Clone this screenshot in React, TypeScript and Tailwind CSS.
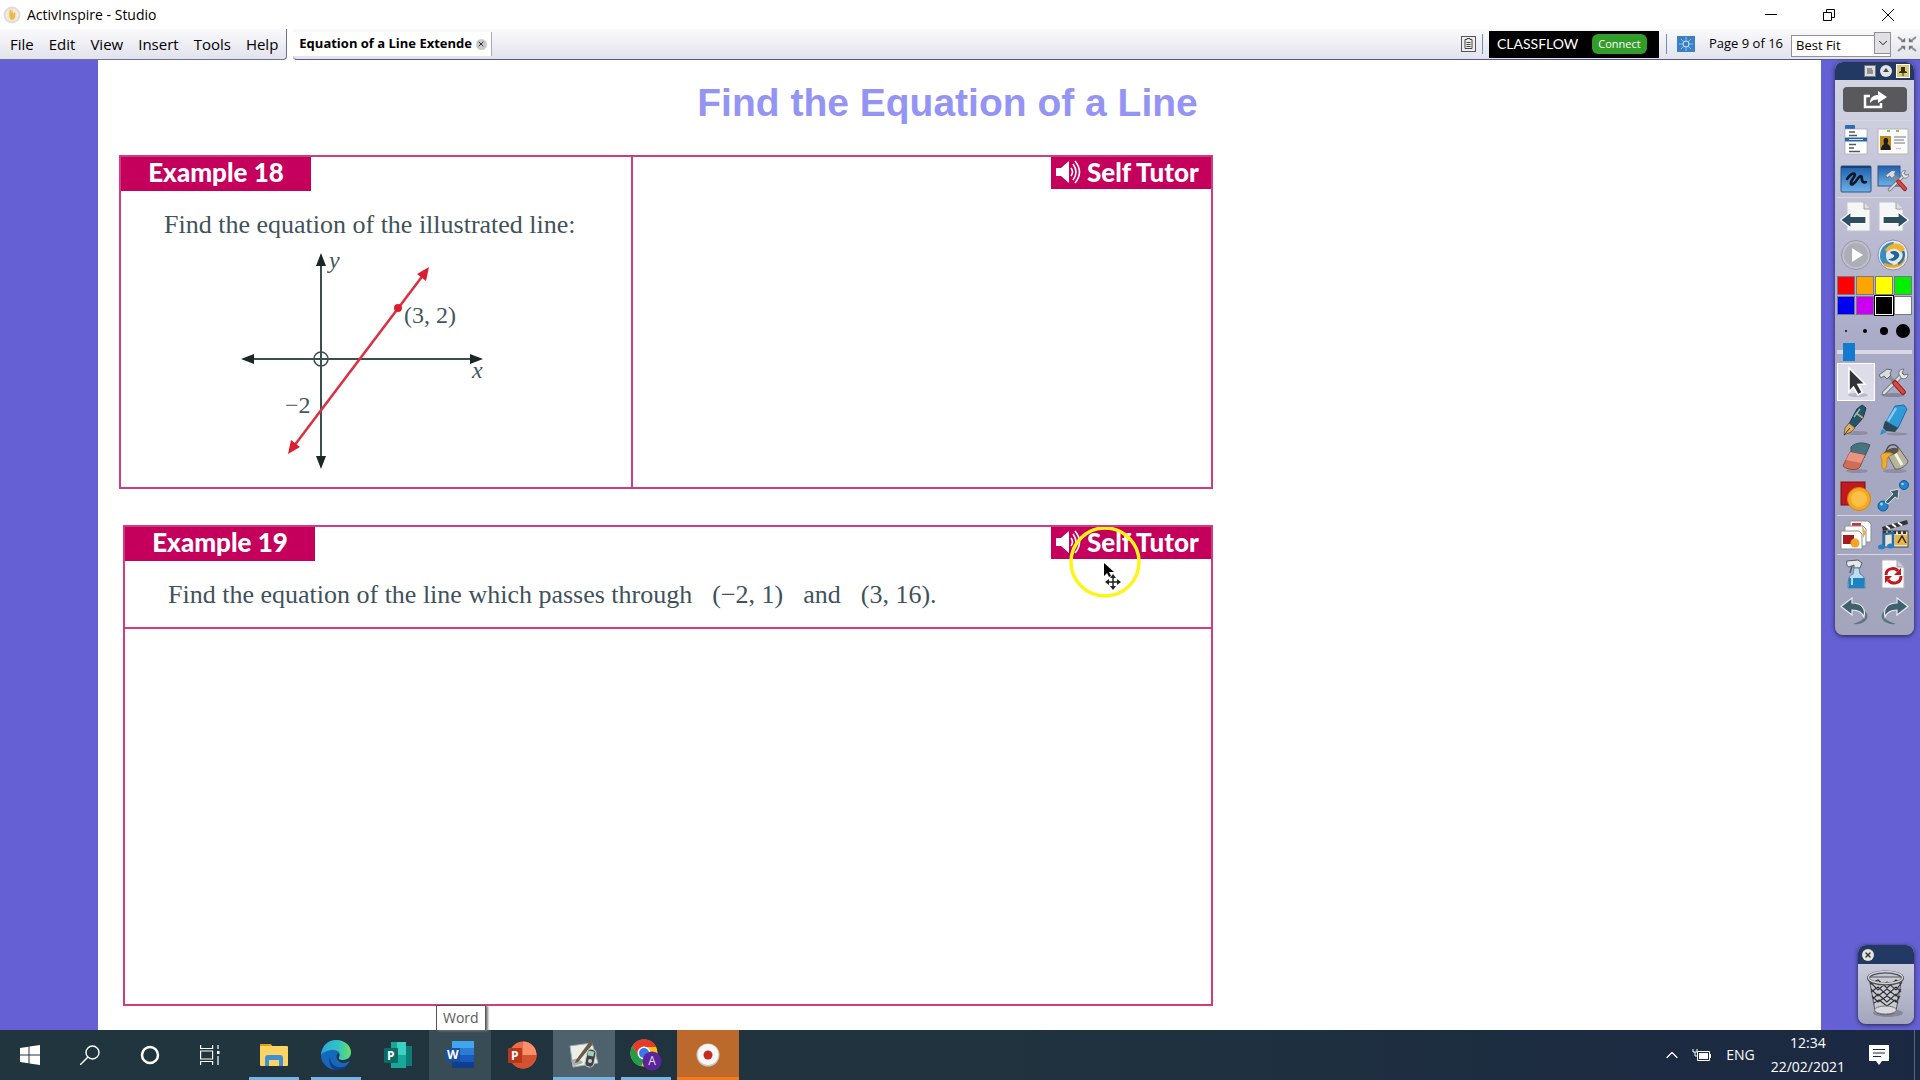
import type { ReactNode } from "react";
import { ChevronDown, ChevronUp, X } from "lucide-react";

const MENUS = ["File", "Edit", "View", "Insert", "Tools", "Help"];

const COLORS = [
    { name: "Red", bg: "bg-[#ff0000]" },
    { name: "Orange", bg: "bg-[#ffa500]" },
    { name: "Yellow", bg: "bg-[#ffff00]" },
    { name: "Green", bg: "bg-[#00f000]" },
    { name: "Blue", bg: "bg-[#0000f0]" },
    { name: "Magenta", bg: "bg-[#cc00f0]" },
    { name: "Black", bg: "bg-black", selected: true },
    { name: "White", bg: "bg-white" },
];

/* ---------- toolbox icons (32 x 32 grid) ---------- */

const Icon = ({ children }: { children: ReactNode }) => (
    <svg viewBox="0 0 32 32" className="h-8 w-8" fill="none">{children}</svg>
);

const MenuIcon = () => (
    <Icon>
        <rect x="5" y="1" width="10" height="6" rx="1" fill="#2e6bb0" />
        <rect x="5" y="5" width="22" height="25" fill="#fff" stroke="#9a9cb0" strokeWidth=".6" />
        <path d="M9 8h6M9 11.500h8M9 20.500h7M9 24h5M9 27.500h11" stroke="#55565f" strokeWidth="1.300" />
        <rect x="5" y="13.500" width="22" height="4" fill="#2b62a6" />
        <path d="M9 15.500h14" stroke="#cfe0f5" strokeWidth="1" />
    </Icon>
);

const ProfileIcon = () => (
    <Icon>
        <rect x="1" y="5" width="30" height="25" fill="#fbfbfb" stroke="#b9b7ae" />
        <path d="M10 7h3M19 7h3" stroke="#69a843" strokeWidth="1.500" />
        <rect x="3" y="12" width="11" height="14" fill="#c08a18" />
        <path d="M4 26c0-4 2-5 3-6-1-5 0-6 2-6s3 2 1.500 6c2 1 3 2 3 6z" fill="#1d1c22" />
        <path d="M17 13h12M17 16h10M17 19h11" stroke="#77777e" />
        <path d="M19 25c2-2 3 1 5-1" stroke="#d7a6b0" />
    </Icon>
);

const AnnotateIcon = () => (
    <Icon>
        <rect x="1" y="4" width="30" height="26" rx="1" fill="url(#screen)" stroke="#2c5686" />
        <path d="M1.500 5h29" stroke="#17375f" strokeWidth="1.500" />
        <path d="M7 17c5-7 10-7 7-2-3 4-5 9-1 7s5-8 8-8c2 0-1 8 5 6" stroke="#0c1626" strokeWidth="2.600" strokeLinecap="round" />
    </Icon>
);

const Hammer = () => (
    <>
        <path d="M25 9L7 27" stroke="#6d7177" strokeWidth="4.500" strokeLinecap="round" />
        <path d="M25 9L7 27" stroke="#d9dcdf" strokeWidth="2.500" strokeLinecap="round" />
        <path d="M23 10c-3-4 0-7 4-7l-2 4 2 2 4-1c0 4-4 6-7 4z" fill="#e4e6e8" stroke="#6d7177" />
        <path d="M10 8l8 9" stroke="#8a8e93" strokeWidth="3.500" />
        <path d="M18 17l8 9" stroke="#8c1d1d" strokeWidth="5.500" strokeLinecap="round" />
        <path d="M18 17l8 9" stroke="#d8483c" strokeWidth="3.500" strokeLinecap="round" />
        <path d="M2 9l8-6 5 1-2 3 1 2-4 4-3-3-3 2z" fill="#d9dcdf" stroke="#62666b" />
    </>
);

const DesktopToolsIcon = () => (
    <Icon>
        <rect x="1" y="4" width="22" height="20" fill="url(#screen)" stroke="#2c5686" />
        <g transform="translate(7 6) scale(.8)"><Hammer /></g>
    </Icon>
);

const ToolsIcon = () => <Icon><ellipse cx="16" cy="29" rx="12" ry="2" fill="#85869a" /><Hammer /></Icon>;

const PageIcon = ({ next }: { next?: boolean }) => (
    <Icon>
        <path d={next ? "M2 1h17l7 7v22H2z" : "M7 1h17l6 7v22H7z"} fill="#f6f6f7" stroke="#c3c4cc" />
        <path d={next ? "M19 1v7h7" : "M24 1v7h6"} fill="#ddd" stroke="#9fa0aa" />
        <path
            d={next ? "M6 15.500h15V11l10.500 8-10.500 8v-4.500H6z" : "M26 15.500H11V11L.5 19 11 27v-4.500h15z"}
            fill="#2d4e61" stroke="#fff" strokeWidth="1.200"
        />
    </Icon>
);

const PlayIcon = () => (
    <Icon>
        <circle cx="16" cy="16" r="14.500" fill="#bfc0c8" stroke="#9698a5" />
        <circle cx="16" cy="16" r="12" fill="#adaeb8" />
        <path d="M12 9l11 7-11 7z" fill="#fff" />
    </Icon>
);

const PaletteIcon = () => (
    <Icon>
        <circle cx="16" cy="16" r="15" fill="#e4e7ed" stroke="#8b8fa4" />
        <path d="M3 17C3 8 10 3 17 3l-2 6c-5 1-6 4-6 8s3 7 7 8l-3 3C7 27 3 23 3 17z" fill="#3a8dc2" />
        <path d="M8 11c5-8 15-9 20-1l-4 4c-4-6-10-5-14-1z" fill="#efb32c" />
        <path d="M13 13c6-3 13 2 7 7-3 3-7 2-9 0 4 0 7-2 6-4-1-1-3-1-4-3z" fill="#1c6796" />
        <path d="M7 25c7 4 17 3 20-5" stroke="#e9a528" strokeWidth="3" />
        <path d="M26 12c2 5 0 10-5 13" stroke="#2674a8" strokeWidth="2.500" />
    </Icon>
);

const SelectIcon = () => (
    <Icon>
        <ellipse cx="18" cy="29" rx="10" ry="2" fill="#b8bac8" />
        <path d="M9 2l16 16-7 .5 4.500 8-4.500 2.500-4.500-8L9 26z" fill="#303338" stroke="#fff" strokeWidth="1.600" />
    </Icon>
);

const PenIcon = () => (
    <Icon>
        <ellipse cx="17" cy="29" rx="11" ry="2" fill="#8d8ea1" />
        <path d="M17 5l5-4 4 3-3 10-9 10-5-4z" fill="#23566d" stroke="#203540" />
        <path d="M16 9l7 5" stroke="#c7a45c" strokeWidth="2" />
        <path d="M14 13l6-8" stroke="#8ab8ca" strokeWidth="1.500" />
        <path d="M9 19l6 5-4 4-7 3 1-7z" fill="#d9b06a" stroke="#6b4e25" strokeWidth=".8" />
        <path d="M4 31l6-7" stroke="#48351c" />
    </Icon>
);

const HighlighterIcon = () => (
    <Icon>
        <ellipse cx="20" cy="30" rx="11" ry="1.500" fill="#8d8ea1" />
        <path d="M18 2l9-1 3 4-9 19-12-6z" fill="#2f9ad8" stroke="#1b6ea5" />
        <path d="M19 4l-8 13" stroke="#83cbf2" strokeWidth="2.500" />
        <path d="M8 17l13 7-3 4-9-1-3-3z" fill="#29485a" />
        <path d="M5 25l5 3-7 3z" fill="#2b8fd0" />
    </Icon>
);

const EraserIcon = () => (
    <Icon>
        <ellipse cx="17" cy="29" rx="11" ry="2" fill="#8d8ea1" />
        <path d="M11 5c5-5 13-5 19-2l-6 13-13-4z" fill="#47727e" stroke="#34555f" />
        <path d="M10 10l15 3-5 12c-3 4-13 3-17-1z" fill="#cf6e58" stroke="#93463a" />
        <path d="M10 10l15 3-4 8-15-3z" fill="#e89580" />
    </Icon>
);

const FillIcon = () => (
    <Icon>
        <ellipse cx="18" cy="29" rx="12" ry="2" fill="#8d8ea1" />
        <path d="M9 12C9 1 20 0 22 8" stroke="#4b4d52" strokeWidth="1.500" />
        <path d="M9 10l13-4 9 13c-1 5-8 9-13 8z" fill="#b7b49a" stroke="#66645a" />
        <path d="M18 11l7 12" stroke="#f4f3e4" strokeWidth="3" />
        <ellipse cx="14" cy="10" rx="8" ry="3.500" transform="rotate(-18 14 10)" fill="#58564a" />
        <path d="M4 13c3-3 9-3 12-1-3 2-6 2-6 6s0 9-3 9-2-5-2-8-2-4-1-6z" fill="#f0ac2e" stroke="#b87912" strokeWidth=".7" />
    </Icon>
);

const ShapeIcon = () => (
    <Icon>
        <rect x="1" y="2" width="24" height="23" fill="#c01920" stroke="#7f1014" />
        <circle cx="19" cy="19" r="11.500" fill="#f5a81d" stroke="#d68508" />
        <circle cx="19" cy="19" r="8" fill="#fbc047" />
    </Icon>
);

const ConnectorIcon = () => (
    <Icon>
        <circle cx="6" cy="26" r="5" fill="#2282cc" stroke="#14598f" />
        <circle cx="27" cy="5" r="4.500" fill="#2282cc" stroke="#14598f" />
        <circle cx="4.500" cy="24" r="1.500" fill="#9bd4fa" />
        <circle cx="25.500" cy="4" r="1.300" fill="#9bd4fa" />
        <path d="M8 22l8-8-3-3 9-2-1 10-3-2-7 7z" fill="#3d5e66" stroke="#d9e2e4" />
    </Icon>
);

const ResourceIcon = () => (
    <Icon>
        <path d="M10 2h18l3 3v18H10z" fill="#fff" stroke="#8d8e98" />
        <rect x="12" y="4" width="9" height="3" fill="#c33" />
        <path d="M5 7h18l3 3v17H5z" fill="#fff" stroke="#8d8e98" />
        <path d="M22 6l4 8-3 5z" fill="#e2b052" />
        <path d="M1 12h18l3 3v15H1z" fill="#fff" stroke="#8d8e98" />
        <rect x="3" y="16" width="11" height="9" fill="#a51a1c" />
        <circle cx="15" cy="24" r="4.500" fill="#f0a526" />
    </Icon>
);

const MediaIcon = () => (
    <Icon>
        <path d="M5 8l25-7 1 4L6 12z" fill="#333" />
        <path d="M9 7l4 3M15 5l4 3M21 3.500l4 3" stroke="#fff" strokeWidth="2" />
        <rect x="6" y="12" width="25" height="16" fill="#e9e5d2" stroke="#454545" />
        <path d="M6 13.500h25" stroke="#333" strokeWidth="3" strokeDasharray="3 2" />
        <path d="M18 16h12v10H18z" fill="#f0b43a" />
        <path d="M21 24l4-7 4 7" stroke="#272727" strokeWidth="1.500" />
        <path d="M7 28V15l9-1v13" stroke="#226da9" strokeWidth="2.500" />
        <ellipse cx="4.500" cy="28" rx="3.500" ry="2.500" fill="#2380c8" />
        <ellipse cx="13.500" cy="27" rx="3.500" ry="2.500" fill="#2380c8" />
    </Icon>
);

const SprayIcon = () => (
    <Icon>
        <path d="M7 3l11-1 4 3-2 5h-6V7L9 9c-2 0-3-3-2-6z" fill="#e5e8eb" stroke="#575c63" />
        <path d="M12 8l-2 7" stroke="#575c63" strokeWidth="1.500" />
        <path d="M14 10h5l1 6c4 2 5 4 5 14H8c0-10 1-12 5-14z" fill="#b9ddf2" stroke="#5c87a3" />
        <path d="M8.500 20h16v10h-16z" fill="#1f82c0" />
        <path d="M12 20v7" stroke="#e9f6ff" strokeWidth="1.500" />
    </Icon>
);

const ResetIcon = () => (
    <Icon>
        <path d="M5 2h15l7 7v21H5z" fill="#fff" stroke="#b3b4bd" />
        <path d="M20 2v7h7" fill="#ccd" stroke="#9fa0aa" />
        <path d="M9 17c0-7 9-8 12-4M24 18c0 8-9 9-13 4" stroke="#c3161d" strokeWidth="3" />
        <path d="M24 10v7h-7zM8 25v-7h7z" fill="#c3161d" />
    </Icon>
);

const UndoIcon = ({ redo }: { redo?: boolean }) => (
    <Icon>
        <g transform={redo ? "translate(32 0) scale(-1 1)" : undefined}>
            <path d="M23 15c4 6 0 10-10 13 10 1 16-4 14-10-1-2-2-3-4-3z" fill="#5d7580" />
            <path d="M12 2v5c10 0 14 6 12 14-2-5-6-7-12-7v5L1 10.500z" fill="#40606e" stroke="#e6eaec" strokeWidth="1.200" />
        </g>
    </Icon>
);

const ShareIcon = () => (
    <svg viewBox="0 0 24 18" className="h-[18px] w-6" fill="none">
        <path d="M7 5H2v11h16v-4" stroke="#fff" strokeWidth="2.500" />
        <path d="M7 12c0-6 4-8 8-8V0l9 6-9 6V8.500c-4 0-6 1-8 3.500z" fill="#fff" />
    </svg>
);

const TrashIcon = () => (
    <svg viewBox="0 0 40 48" className="h-12 w-10" fill="none">
        <ellipse cx="22" cy="43" rx="15" ry="4" fill="#86879a" />
        <path d="M3 7l6 34c3 5 18 5 21 0l6-34z" fill="#c9cad2" stroke="#55565b" />
        <path
            d="M4 12l8 8 9-8 9 8 6-8M5 19l7 7 9-7 9 7 5-7M6 26l6 6 9-6 9 6 4-6M4 14l8-4 9 8 9-8 5 4M5 22l7-5 9 8 9-8 5 5M7 29l5-5 9 8 9-8 3 5M8 33l5-3 8 6 8-6 3 3"
            stroke="#303135" strokeWidth="1.100"
        />
        <ellipse cx="19.500" cy="40" rx="11" ry="4" fill="#d9dade" stroke="#77787d" />
        <ellipse cx="19.500" cy="8" rx="17" ry="6" stroke="#4c4d52" strokeWidth="3" />
        <ellipse cx="19.500" cy="7.500" rx="17" ry="6" stroke="#d2d3d6" strokeWidth="1.400" />
    </svg>
);

const SpeakerIcon = () => (
    <svg viewBox="0 0 28 26" className="h-[26px] w-7 shrink-0" fill="none" stroke="#fff">
        <path d="M1 9h5l8-7v22l-8-7H1z" fill="#fff" stroke="none" />
        <path d="M16 9q3 4 0 8M18 5q6 8 0 16M20 2q9 11 0 22" strokeWidth="1.600" />
    </svg>
);

/* ---------- flipchart ---------- */

const Tag = ({ children }: { children: ReactNode }) => (
    <h2 className="flex h-[34px] w-[190px] items-center justify-center bg-[#c4005c] pb-1 font-[Lato] text-[26px] font-black text-white">
        {children}
    </h2>
);

const SelfTutor = () => (
    <button className="flex h-8 w-40 items-center gap-1 whitespace-nowrap bg-[#c4005c] pb-0.5 pl-1 font-[Lato] text-[26px] font-black text-white">
        <SpeakerIcon />
        Self Tutor
    </button>
);

const LineGraph = () => (
    <svg viewBox="0 -8 260 232" className="ml-[113px] h-[232px] w-[260px]" fill="none">
        <g stroke="#3a4f4d" strokeWidth="2">
            <path d="M87 12v202M18 110h222" />
            <circle cx="87" cy="110" r="7" strokeWidth="1.500" />
        </g>
        <g fill="#1c2624">
            <path d="M87 4l5 13H82zM87 220l5-13H82zM7 110l13-5v10zM249 110l-13-5v10z" />
        </g>
        <path d="M60 197L190 25" stroke="#d83244" strokeWidth="2.600" />
        <circle cx="164" cy="59" r="4" fill="#dc1f30" />
        <path d="M195 18l-3 14-9-7zM54 205l3-14 9 7z" fill="#dc1f30" />
        <g fill="#43565e" fontFamily="Liberation Serif, serif" fontSize="24">
            <text x="95" y="19" fontStyle="italic">y</text>
            <text x="238" y="129" fontStyle="italic">x</text>
            <text x="170" y="74">(3, 2)</text>
            <text x="51" y="164">−2</text>
        </g>
    </svg>
);

const PointerRing = () => (
    <svg viewBox="0 0 72 72" className="pointer-events-none absolute right-[70px] top-0 h-[72px] w-[72px]" fill="none">
        <circle cx="36" cy="35" r="34" stroke="#fdf51a" strokeWidth="3.500" />
        <path d="M35 36v13l3-3 2 4 2-1-2-4h5z" fill="#000" />
        <path d="M44 49v12M37.500 55h13" stroke="#222" strokeWidth="1.500" />
        <path d="M44 47l3 4h-6zM44 63l3-4h-6zM36 55l4-3v6zM52 55l-4-3v6z" fill="#222" />
    </svg>
);

function Flipchart() {
    return (
        <main className="flex min-w-0 flex-1 flex-col bg-white pb-6 pt-[19px] text-[#3f525c]">
            <h1 className="pr-6 text-center font-['Liberation_Sans'] text-[39px] font-bold leading-[48px] text-[#9494f4]">
                Find the Equation of a Line
            </h1>
            <div className="mt-7 flex w-[65%] flex-1 flex-col gap-9 pl-[21px] pr-[5px]">
                <section className="grid grid-cols-[47%_53%] border-2 border-[#cf3d80]">
                    <div className="border-r-2 border-[#cf3d80] pb-3.5">
                        <Tag>Example 18</Tag>
                        <p className="mt-[18px] pl-[43px] font-['Liberation_Serif'] text-[26px] leading-8">
                            Find the equation of the illustrated line:
                        </p>
                        <LineGraph />
                    </div>
                    <div className="flex items-start justify-end">
                        <SelfTutor />
                    </div>
                </section>

                <section className="relative ml-1 flex flex-1 flex-col border-2 border-[#cf3d80]">
                    <div className="border-b-2 border-[#cf3d80] pb-4">
                        <div className="flex justify-between">
                            <Tag>Example 19</Tag>
                            <SelfTutor />
                        </div>
                        <p className="mt-[18px] flex gap-5 pl-[43px] font-['Liberation_Serif'] text-[26px] leading-8">
                            <span>Find the equation of the line which passes through</span>
                            <span>(−2, 1)</span>
                            <span>and</span>
                            <span>(3, 16).</span>
                        </p>
                    </div>
                    <PointerRing />
                </section>
            </div>
        </main>
    );
}

/* ---------- toolbox ---------- */

const ToolRow = ({ children }: { children: ReactNode }) => (
    <div className="grid h-[38px] grid-cols-2">{children}</div>
);

const Tool = ({ label, active, children }: { label: string; active?: boolean; children: ReactNode }) => (
    <button
        aria-label={label}
        className={`flex items-center justify-center ${active ? "border border-white bg-[#dcdde8]" : ""}`}
    >
        {children}
    </button>
);

const Separator = () => <div className="h-px bg-[#d6d7e2]" />;

function Toolbox() {
    return (
        <div className="overflow-hidden rounded-lg bg-gradient-to-b from-[#d6d7e4] via-[#a9aac6] to-[#a3a5bd] shadow-[0_1px_4px_#22224a]">
            <div className="flex h-[18px] items-center justify-end gap-1 bg-[#223a63] pr-1">
                <button aria-label="Toolbox menu" className="h-3 w-3 border border-[#777] bg-[#ddd]">
                    <svg viewBox="0 0 10 10"><path d="M2 3h5M2 5h6M2 7h6" stroke="#444" /></svg>
                </button>
                <button aria-label="Roll up" className="h-3 w-3 rounded-full bg-[#e3e4ea]">
                    <svg viewBox="0 0 12 12"><path d="M3 7l3-4 3 4z" fill="#444" /></svg>
                </button>
                <button aria-label="Pin" className="h-3.5 w-3.5 border border-white bg-[#dccb74]">
                    <svg viewBox="0 0 12 12"><path d="M4 2h4v4l2 1v1H2V7l2-1zM5.500 8h1v3h-1z" fill="#332d13" /></svg>
                </button>
            </div>
            <div className="px-0.5 pb-1">
                <button aria-label="Share" className="mx-auto mb-2 mt-[7px] flex h-[25px] w-16 items-center justify-center rounded bg-[#59595c]">
                    <ShareIcon />
                </button>
                <Separator />
                <ToolRow>
                    <Tool label="Main menu"><MenuIcon /></Tool>
                    <Tool label="Switch profile"><ProfileIcon /></Tool>
                </ToolRow>
                <ToolRow>
                    <Tool label="Annotate over desktop"><AnnotateIcon /></Tool>
                    <Tool label="Desktop tools"><DesktopToolsIcon /></Tool>
                </ToolRow>
                <Separator />
                <ToolRow>
                    <Tool label="Previous page"><PageIcon /></Tool>
                    <Tool label="Next page"><PageIcon next /></Tool>
                </ToolRow>
                <ToolRow>
                    <Tool label="Start"><PlayIcon /></Tool>
                    <Tool label="ExpressPoll"><PaletteIcon /></Tool>
                </ToolRow>
                <div className="mt-0.5 grid grid-cols-4 gap-px">
                    {COLORS.map(c => (
                        <button
                            key={c.name}
                            aria-label={c.name}
                            className={`h-[19px] border ${c.bg} ${c.selected ? "border-white outline outline-black" : "border-[#77778a]"}`}
                        />
                    ))}
                </div>
                <div className="mt-1 grid h-6 grid-cols-4 items-center justify-items-center">
                    <button aria-label="Width 2" className="h-0.5 w-0.5 rounded-full bg-black" />
                    <button aria-label="Width 4" className="h-1 w-1 rounded-full bg-black" />
                    <button aria-label="Width 8" className="h-2 w-2 rounded-full bg-black" />
                    <button aria-label="Width 14" className="h-3.5 w-3.5 rounded-full bg-black" />
                </div>
                <input
                    type="range"
                    aria-label="Pen width"
                    min={0}
                    max={100}
                    defaultValue={9}
                    className="mb-0.5 block h-[18px] w-full appearance-none bg-transparent [&::-webkit-slider-runnable-track]:h-1 [&::-webkit-slider-runnable-track]:bg-[#d9dae6] [&::-webkit-slider-thumb]:-mt-[7px] [&::-webkit-slider-thumb]:h-[18px] [&::-webkit-slider-thumb]:w-3 [&::-webkit-slider-thumb]:appearance-none [&::-webkit-slider-thumb]:bg-[#1479d0]"
                />
                <ToolRow>
                    <Tool label="Select" active><SelectIcon /></Tool>
                    <Tool label="Tools"><ToolsIcon /></Tool>
                </ToolRow>
                <ToolRow>
                    <Tool label="Pen"><PenIcon /></Tool>
                    <Tool label="Highlighter"><HighlighterIcon /></Tool>
                </ToolRow>
                <ToolRow>
                    <Tool label="Eraser"><EraserIcon /></Tool>
                    <Tool label="Fill"><FillIcon /></Tool>
                </ToolRow>
                <ToolRow>
                    <Tool label="Shape"><ShapeIcon /></Tool>
                    <Tool label="Connector"><ConnectorIcon /></Tool>
                </ToolRow>
                <Separator />
                <ToolRow>
                    <Tool label="Resource library"><ResourceIcon /></Tool>
                    <Tool label="Insert media"><MediaIcon /></Tool>
                </ToolRow>
                <Separator />
                <ToolRow>
                    <Tool label="Clear"><SprayIcon /></Tool>
                    <Tool label="Reset page"><ResetIcon /></Tool>
                </ToolRow>
                <ToolRow>
                    <Tool label="Undo"><UndoIcon /></Tool>
                    <Tool label="Redo"><UndoIcon redo /></Tool>
                </ToolRow>
            </div>
        </div>
    );
}

function TrashCan() {
    return (
        <div className="ml-auto w-14 overflow-hidden rounded-lg bg-gradient-to-b from-[#d6d7e4] to-[#a3a5bd] shadow-[0_1px_4px_#22224a]">
            <div className="flex h-[19px] items-center bg-[#223a63] pl-1">
                <button aria-label="Close trash" className="flex h-3 w-3 items-center justify-center rounded-full bg-[#e4e5df] text-[#333]">
                    <X size={8} strokeWidth={4} />
                </button>
            </div>
            <div className="flex h-[60px] items-center justify-center">
                <TrashIcon />
            </div>
        </div>
    );
}

/* ---------- window chrome ---------- */

function TitleBar() {
    return (
        <header className="flex h-[29px] shrink-0 items-center bg-white">
            <svg viewBox="0 0 18 18" className="ml-[3px] h-[18px] w-[18px]">
                <circle cx="9" cy="9" r="8.500" fill="#dedce2" />
                <circle cx="9" cy="9" r="6.500" fill="#f6ead0" />
                <path d="M6.500 8V4h1.500v4l1-5 1 5 2-2c1 3 0 8-3 8-2 0-3-3-2.500-6z" fill="#efb64b" />
            </svg>
            <span className="ml-1.5 text-sm">ActivInspire - Studio</span>
            <div className="ml-auto flex items-center">
                <button aria-label="Minimize" className="flex w-[58px] justify-center">
                    <svg viewBox="0 0 12 12" className="h-3 w-3"><path d="M0 5.500h12" stroke="#000" /></svg>
                </button>
                <button aria-label="Restore" className="flex w-[58px] justify-center">
                    <svg viewBox="0 0 12 12" className="h-3 w-3" fill="none" stroke="#000">
                        <path d="M.5 3.500h8v8h-8zM3.500 3V.5h8v8H9" />
                    </svg>
                </button>
                <button aria-label="Close" className="mr-0.5 flex w-[60px] justify-center">
                    <svg viewBox="0 0 12 12" className="h-3 w-3"><path d="M0 0l12 12M12 0L0 12" stroke="#000" /></svg>
                </button>
            </div>
        </header>
    );
}

function MenuBar() {
    return (
        <div className="flex h-[31px] shrink-0 gap-1.5 bg-white">
            <nav className="flex items-center gap-[15px] rounded-br border-b border-r border-[#6a6f96] bg-gradient-to-b from-[#fafafc] to-[#e2e3ec] pl-2.5 pr-2 text-[15px]">
                {MENUS.map(m => <button key={m}>{m}</button>)}
            </nav>
            <div className="flex flex-1 items-center rounded-bl border-b border-[#53588a] bg-gradient-to-b from-[#fafafc] to-[#e2e3ec]">
                <div className="flex h-6 items-center gap-1 border-r border-[#a7a9c0] bg-white pl-1.5 pr-1">
                    <span className="whitespace-nowrap text-[13px] font-bold">Equation of a Line Extende</span>
                    <button aria-label="Close tab" className="flex h-[11px] w-[11px] items-center justify-center rounded-full bg-[#c9cacf] text-[#333]">
                        <X size={8} strokeWidth={3} />
                    </button>
                </div>

                <div className="ml-auto flex h-full items-center">
                    <button aria-label="Notes" className="border border-[#555] bg-[#eee]">
                        <svg viewBox="0 0 13 14" className="h-3.5 w-[13px]" fill="none" stroke="#444">
                            <path d="M3 2.500h2V1.500h3v1h2v9H3zM4.500 5.500h4M4.500 7.500h4M4.500 9.500h4" />
                        </svg>
                    </button>
                    <div className="ml-1.5 h-5 w-px bg-[#6f8fc4]" />
                    <div className="ml-1.5 flex h-[27px] w-[170px] items-center justify-between bg-black pl-2 pr-3">
                        <span className="font-[Lato] text-sm text-white">CLASSFLOW</span>
                        <button className="h-5 w-[55px] rounded-md bg-[#329d2a] text-[11px] text-white">Connect</button>
                    </div>
                    <div className="ml-[7px] h-5 w-px bg-[#6f8fc4]" />
                    <button aria-label="Page browser" className="ml-2.5">
                        <svg viewBox="0 0 18 16" className="h-4 w-[18px]" fill="none">
                            <rect width="18" height="16" fill="#3b80c4" />
                            <path d="M9 1v14M2 8h14M4 3l10 10M14 3L4 13" stroke="#8fc0ec" strokeWidth="1" />
                            <circle cx="9" cy="8" r="3" fill="#3b80c4" stroke="#cfe6fb" />
                        </svg>
                    </button>
                    <span className="ml-3.5 text-[13px]">Page 9 of 16</span>
                    <div className="relative ml-2">
                        <select aria-label="Zoom" className="h-[22px] w-[100px] appearance-none border border-[#8f9098] bg-white pb-0.5 pl-1 text-[13px] leading-[18px]">
                            <option>Best Fit</option>
                        </select>
                        <span className="pointer-events-none absolute right-0 top-0 flex h-[22px] w-[17px] items-center justify-center border border-[#8f9098] bg-[#e1e1e3]">
                            <ChevronDown size={14} strokeWidth={1.5} />
                        </span>
                    </div>
                    <button aria-label="Full screen" className="ml-1.5 mr-[3px]">
                        <svg viewBox="0 0 20 16" className="h-4 w-5" fill="none" stroke="#8c8f96" strokeWidth="2">
                            <path d="M1 1l5 4M19 1l-5 4M1 15l5-4M19 15l-5-4" />
                            <path d="M8 2v4L4 6zM12 2v4h4zM8 14v-4H4zM12 14v-4h4z" strokeWidth=".5" fill="#6a6d75" />
                        </svg>
                    </button>
                </div>
            </div>
        </div>
    );
}

/* ---------- taskbar ---------- */

const ExplorerIcon = () => (
    <svg viewBox="0 0 28 24" className="h-6 w-7">
        <path d="M0 1h11l2 3H0z" fill="#dfa014" />
        <rect y="3" width="28" height="20" rx="1" fill="#fdd463" />
        <path d="M5 23v-8q0-3 3-3h12q3 0 3 3v8h-4v-6H9v6z" fill="#3d8fd6" />
        <rect x="9" y="19" width="10" height="4" fill="#fdd463" />
    </svg>
);

const EdgeIcon = () => (
    <svg viewBox="0 0 30 30" className="h-[30px] w-[30px]">
        <defs>
            <linearGradient id="edge-top" x1="0" x2="1">
                <stop offset="0" stopColor="#2ba8dc" />
                <stop offset=".6" stopColor="#33c4c0" />
                <stop offset="1" stopColor="#6ee060" />
            </linearGradient>
        </defs>
        <circle cx="15" cy="15" r="15" fill="#1668bd" />
        <path d="M0 15C1 5 8 0 15 0c9 0 15 6 15 12 0 5-4 8-8 8-4 0-5-1-4-3 2-3 0-7-5-7C7 10 2 12 0 15z" fill="url(#edge-top)" />
        <path d="M9 17c0 7 6 11 12 10 3 0 5-2 7-4-2 5-7 7-12 7C10 30 7 22 9 17z" fill="#123f87" />
        <path d="M17 13c-3 4-1 9 5 10 3 0 5-1 8-3v-5c-1 4-5 5-8 5-4 0-5-1-4-3 1-2 0-3-1-4z" fill="#21343f" />
    </svg>
);

const PublisherIcon = () => (
    <svg viewBox="0 0 30 28" className="h-7 w-[30px]">
        <rect x="8" y="1" width="15" height="26" fill="#19a79c" />
        <rect x="14" y="1" width="9" height="13" fill="#3cd0c0" />
        <rect x="23" y="5" width="6" height="20" fill="#0b7d75" />
        <rect x="1" y="7" width="14" height="15" rx="1" fill="#0a6b64" />
        <text x="4" y="19" fill="#fff" fontFamily="Open Sans, sans-serif" fontWeight="700" fontSize="12">P</text>
    </svg>
);

const WordIcon = () => (
    <svg viewBox="0 0 30 28" className="h-7 w-[30px]">
        <rect x="7" y="0" width="22" height="7" fill="#41a5ee" />
        <rect x="7" y="7" width="22" height="7" fill="#2b7cd3" />
        <rect x="7" y="14" width="22" height="7" fill="#185abd" />
        <rect x="7" y="21" width="22" height="6" fill="#103f91" />
        <rect x="1" y="7" width="14" height="14" rx="1" fill="#174ea6" />
        <text x="2" y="18" fill="#fff" fontFamily="Open Sans, sans-serif" fontWeight="700" fontSize="12">W</text>
    </svg>
);

const PowerPointIcon = () => (
    <svg viewBox="0 0 30 28" className="h-7 w-[30px]">
        <circle cx="16" cy="14" r="13.500" fill="#ed6c47" />
        <path d="M16 .5A13.500 13.500 0 0 1 29.500 14H16z" fill="#ff8f6b" />
        <path d="M2.500 14h27a13.500 13.500 0 0 1-27 0z" fill="#d35230" />
        <rect x="1" y="7" width="14" height="15" rx="1" fill="#b7371b" />
        <text x="4" y="19" fill="#fff" fontFamily="Open Sans, sans-serif" fontWeight="700" fontSize="12">P</text>
    </svg>
);

const InspireIcon = () => (
    <svg viewBox="0 0 30 28" className="h-7 w-[30px]" fill="none">
        <path d="M1 5l22-3 6 20-25 4z" fill="#eceeea" stroke="#a9aca8" />
        <path d="M2 20c5-4 9-2 12 2l-9 3z" fill="#a9b0a8" />
        <path d="M21 0L7 19l-1 3 3-1L24 3z" fill="#6a5b46" />
        <rect x="17" y="8" width="9" height="18" rx="4" transform="rotate(12 21 17)" fill="#3d4643" stroke="#cfd4d0" />
        <rect x="19" y="10" width="6" height="5" transform="rotate(12 22 12)" fill="#9fd0c4" />
        <circle cx="21" cy="20" r="2" fill="#c9cdca" />
    </svg>
);

const ChromeIcon = () => (
    <svg viewBox="0 0 32 32" className="h-8 w-8">
        <circle cx="14" cy="14" r="13.500" fill="#fbc116" />
        <path d="M2.300 7.200A13.500 13.500 0 0 1 26.200 8H14l-6 9z" fill="#e33b2e" />
        <path d="M2.300 7.200L9 18l5 3-3 6.200A13.500 13.500 0 0 1 2.300 7.200z" fill="#1e9e4b" />
        <circle cx="14" cy="14" r="6.500" fill="#fff" />
        <circle cx="14" cy="14" r="5" fill="#3b78e7" />
        <circle cx="22" cy="22" r="9.500" fill="#5a259c" />
        <text x="22" y="26" textAnchor="middle" fill="#e6dcf5" fontFamily="Open Sans, sans-serif" fontSize="12">A</text>
    </svg>
);

const RecorderIcon = () => (
    <svg viewBox="0 0 24 24" className="h-6 w-6">
        <circle cx="12" cy="12" r="11.500" fill="#c9c6c3" />
        <circle cx="12" cy="11.500" r="10.500" fill="#f6f6f6" />
        <circle cx="12" cy="12" r="4.500" fill="#c22b20" />
    </svg>
);

const APPS = [
    { name: "File Explorer", icon: ExplorerIcon, box: "", bar: "mx-1.5 bg-[#76b4e4]" },
    { name: "Microsoft Edge", icon: EdgeIcon, box: "", bar: "mx-1.5 bg-[#76b4e4]" },
    { name: "Publisher", icon: PublisherIcon, box: "", bar: "" },
    { name: "Word", icon: WordIcon, box: "bg-[#384c55]", bar: "", tip: true },
    { name: "PowerPoint", icon: PowerPointIcon, box: "", bar: "" },
    { name: "ActivInspire", icon: InspireIcon, box: "bg-[#4d626c]", bar: "bg-[#76b4e4]" },
    { name: "Chrome", icon: ChromeIcon, box: "", bar: "mx-1.5 bg-[#76b4e4]" },
    { name: "Recorder", icon: RecorderIcon, box: "bg-[#bc6a2b]", bar: "bg-[#f07a1c]" },
];

function Taskbar() {
    return (
        <footer className="flex h-[50px] shrink-0 bg-gradient-to-r from-[#21353f] via-[#20333e] to-[#1b2842] text-sm text-white">
            <button aria-label="Start" className="flex w-[60px] items-center justify-center">
                <svg viewBox="0 0 20 20" className="h-5 w-5" fill="#fff">
                    <path d="M0 3l8.500-1.200v7.700H0zM9.500 1.600L20 0v9.500H9.500zM0 10.500h8.500v7.700L0 17zM9.500 10.500H20V20L9.500 18.400z" />
                </svg>
            </button>
            <button aria-label="Search" className="flex w-[60px] items-center justify-center">
                <svg viewBox="0 0 20 20" className="h-5 w-5" fill="none" stroke="#fff" strokeWidth="1.400">
                    <circle cx="12.500" cy="7.500" r="6.500" />
                    <path d="M8 12l-8 8" />
                </svg>
            </button>
            <button aria-label="Cortana" className="flex w-[60px] items-center justify-center">
                <svg viewBox="0 0 20 20" className="h-5 w-5" fill="none" stroke="#fff" strokeWidth="2.500">
                    <circle cx="10" cy="10" r="8" />
                </svg>
            </button>
            <button aria-label="Task view" className="flex w-[60px] items-center justify-center">
                <svg viewBox="0 0 20 20" className="h-5 w-5" fill="none" stroke="#fff" strokeWidth="1.200">
                    <path d="M.6 0v3.500h12V0M.6 20v-3.500h12V20M.6 6h12v8H.6zM18 0v4M18 11v9" />
                    <rect x="17" y="6" width="2.500" height="3" fill="#fff" stroke="none" />
                </svg>
            </button>
            <div className="ml-[3px] flex">
                {APPS.map(({ name, icon: AppIcon, box, bar, tip }) => (
                    <div key={name} className={`relative flex w-[62px] flex-col ${box}`}>
                        <button aria-label={name} className="flex flex-1 items-center justify-center pt-0.5">
                            <AppIcon />
                        </button>
                        <span className={`h-[3px] ${bar}`} />
                        {tip && (
                            <span role="tooltip" className="absolute bottom-full left-[7px] border border-[#555] border-b-0 bg-white px-1.5 py-0.5 text-sm text-[#5a5a5a] shadow-[2px_1px_2px_#777]">
                                {name}
                            </span>
                        )}
                    </div>
                ))}
            </div>

            <div className="ml-auto flex items-center">
                <button aria-label="Show hidden icons">
                    <ChevronUp size={20} strokeWidth={1.5} />
                </button>
                <svg viewBox="0 0 20 14" className="ml-2.5 h-3.5 w-5" fill="none" stroke="#fff">
                    <path d="M5.500 3.500h12v9h-12zM18.500 6v4M1 1v3h4V1M3 4v4h2" />
                    <rect x="7" y="5" width="9" height="6" fill="#fff" stroke="none" />
                </svg>
                <span className="ml-3.5">ENG</span>
                <button className="ml-4 text-center leading-6">
                    12:34
                    <br />
                    22/02/2021
                </button>
                <button aria-label="Notifications" className="ml-6">
                    <svg viewBox="0 0 20 20" className="h-5 w-5" fill="#fff">
                        <path d="M0 0h20v16h-7l-3 4-3-4H0z" />
                        <path d="M4 4.500h12M4 8h12M4 11.500h8" stroke="#1b2842" strokeWidth="1.200" />
                    </svg>
                </button>
                <div className="ml-[25px] mr-[5px] h-[50px] w-px bg-[#5b657c]" />
            </div>
        </footer>
    );
}

export default function App() {
    return (
        <div className="flex h-screen min-h-[1000px] flex-col overflow-hidden font-['Open_Sans',sans-serif] text-black">
            {/* shared gradient for the blue screens */}
            <svg className="absolute h-0 w-0" aria-hidden="true">
                <defs>
                    <linearGradient id="screen" x1="0" y1="0" x2="0" y2="1">
                        <stop offset="0" stopColor="#1c5fae" />
                        <stop offset="1" stopColor="#6fb0e6" />
                    </linearGradient>
                </defs>
            </svg>
            <TitleBar />
            <MenuBar />
            <div className="flex min-h-0 flex-1 bg-[#6560d3]">
                <div className="w-[98px] shrink-0" />
                <Flipchart />
                <aside className="flex w-[99px] shrink-0 flex-col justify-between pb-1.5 pl-3.5 pr-1.5 pt-0.5">
                    <Toolbox />
                    <TrashCan />
                </aside>
            </div>
            <Taskbar />
        </div>
    );
}
